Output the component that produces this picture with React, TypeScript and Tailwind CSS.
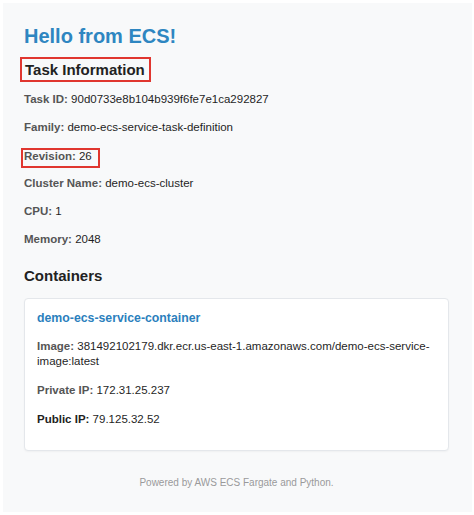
const task = [
  { label: "Task ID:", value: "90d0733e8b104b939f6fe7e1ca292827" },
  { label: "Family:", value: "demo-ecs-service-task-definition" },
  { label: "Revision:", value: "26", boxed: true },
  { label: "Cluster Name:", value: "demo-ecs-cluster" },
  { label: "CPU:", value: "1" },
  { label: "Memory:", value: "2048" },
];

const App = () => {
  return (
    <div className="w-[474px] h-[515px] bg-white pt-[3px] pl-[3px] font-['Liberation_Sans',Arial,sans-serif]">
      <div className="w-[469px] h-[509px] bg-[#f8f9fa] pl-[21px] pr-[23px] pt-[21px]">
        <h1 className="text-[20px] leading-[24px] font-bold text-[#2e86c1]">
          Hello from ECS!
        </h1>
        <h2 className="mt-[9px] -ml-[4px] inline-block border-2 border-[#e0362f] pl-[3px] pr-[4px] pt-[1px] text-[15px] leading-[20px] font-bold text-[#222]">
          Task Information
        </h2>
        <div className="mt-[3px] flex flex-col text-[11.5px]">
          {task.map((row) => (
            <div key={row.label} className="h-[28px] flex items-center">
              <p
                className={
                  row.boxed
                    ? "mt-[6px] -ml-[3px] border-2 border-[#e0362f] pl-[1px] pr-[6px] pb-[3px] leading-[13px] text-[#1f1f1f]"
                    : "leading-[15px] text-[#1f1f1f]"
                }
              >
                <b className="text-[#555]">{row.label}</b> {row.value}
              </p>
            </div>
          ))}
        </div>
        <h2 className="mt-[13px] text-[15px] leading-[20px] font-bold text-[#222]">
          Containers
        </h2>
        <div className="mt-[12px] bg-white border border-[#e4e7eb] rounded-[4px] shadow-[0_1px_2px_rgba(0,0,0,0.04)] px-[12px] pt-[11px] pb-[23px] text-[11.5px] leading-[15px] text-[#1f1f1f]">
          <h3 className="text-[12.3px] leading-[16px] font-bold text-[#2b7fbd]">
            demo-ecs-service-container
          </h3>
          <p className="mt-[13px]">
            <b className="text-[#555]">Image:</b> 381492102179.dkr.ecr.us-east-1.amazonaws.com/demo-ecs-service-image:latest
          </p>
          <p className="mt-[14px]">
            <b className="text-[#555]">Private IP:</b> 172.31.25.237
          </p>
          <p className="mt-[14px]">
            <b className="text-[#222]">Public IP:</b> 79.125.32.52
          </p>
        </div>
        <p className="mt-[25px] text-center text-[10px] leading-[14px] text-[#9a9a9a]">
          Powered by AWS ECS Fargate and Python.
        </p>
      </div>
    </div>
  );
};

export default App;
